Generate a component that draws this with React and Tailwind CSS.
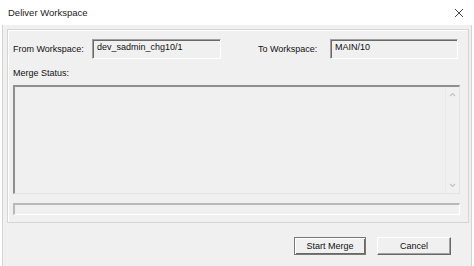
export default function App() {
  const sunken =
    "border-t border-l border-[#a0a0a0] border-b border-r border-b-white border-r-white shadow-[inset_1px_1px_0_#696969]";

  return (
    <div className="w-[474px] h-[266px] bg-white flex flex-col overflow-hidden font-['Liberation_Sans',Arial,sans-serif] text-[9px] leading-[11px] text-[#111]">
      {/* title bar */}
      <div className="h-[25px] flex items-center justify-between pl-[8px] pr-[10px] bg-white">
        <span className="text-[9.5px] text-[#222]">Deliver Workspace</span>
        <svg width="10" height="10" viewBox="0 0 10 10" className="text-[#333]">
          <path d="M1 1 L9 9 M9 1 L1 9" stroke="currentColor" strokeWidth="0.9" />
        </svg>
      </div>

      {/* dialog body */}
      <div className="flex-1 ml-[2px] w-[470px] bg-[#f0f0f0] border-l border-r border-[#d4d4d4] flex flex-col">
        <div className="ml-[4px] mt-[4px] w-[462px] border border-[#d5d5d5] shadow-[inset_1px_1px_0_#fff] pl-[5px] pr-[8px] pt-[9px] pb-[7px] flex flex-col">
          {/* workspaces row */}
          <div className="flex items-center">
            <span className="w-[79px]">From Workspace:</span>
            <div className={`w-[129px] h-[20px] ${sunken} pl-[4px] pt-[2px]`}>dev_sadmin_chg10/1</div>
            <span className="ml-[37px] w-[72px]">To Workspace:</span>
            <div className={`w-[128px] h-[20px] ${sunken} pl-[4px] pt-[2px]`}>MAIN/10</div>
          </div>

          <div className="mt-[9px]">Merge Status:</div>

          {/* status list */}
          <div className="mt-[6px] h-[109px] flex border-t-2 border-l-2 border-[#8f8f8f] border-b border-r border-b-[#e3e3e3] border-r-[#e3e3e3]">
            <div className="flex-1" />
            <div className="w-[14px] flex flex-col justify-between items-center py-[5px] bg-[#f0f0f0] border-l border-[#e9e9e9]">
              <svg width="7" height="5" viewBox="0 0 7 5">
                <path d="M1 4 L3.5 1.5 L6 4" fill="none" stroke="#c2c2c2" strokeWidth="1.2" />
              </svg>
              <svg width="7" height="5" viewBox="0 0 7 5">
                <path d="M1 1 L3.5 3.5 L6 1" fill="none" stroke="#c2c2c2" strokeWidth="1.2" />
              </svg>
            </div>
          </div>

          {/* progress bar */}
          <div className="mt-[9px] h-[12px] border-t-2 border-l-2 border-[#b9b9b9] border-b border-r border-b-white border-r-white bg-[#f0f0f0]" />
        </div>

        {/* buttons */}
        <div className="mt-[14px] flex justify-end gap-[11px] pr-[20px]">
          <button className="w-[72px] h-[18px] bg-[#f0f0f0] border border-[#777] shadow-[inset_1px_1px_0_#fff,inset_-1px_-1px_0_#696969] text-[9px] text-[#111]">
            Start Merge
          </button>
          <button className="w-[74px] h-[18px] bg-[#f0f0f0] border-t border-l border-white border-b border-r border-b-[#696969] border-r-[#696969] shadow-[inset_-1px_-1px_0_#a0a0a0] text-[9px] text-[#111]">
            Cancel
          </button>
        </div>
      </div>
    </div>
  );
}
